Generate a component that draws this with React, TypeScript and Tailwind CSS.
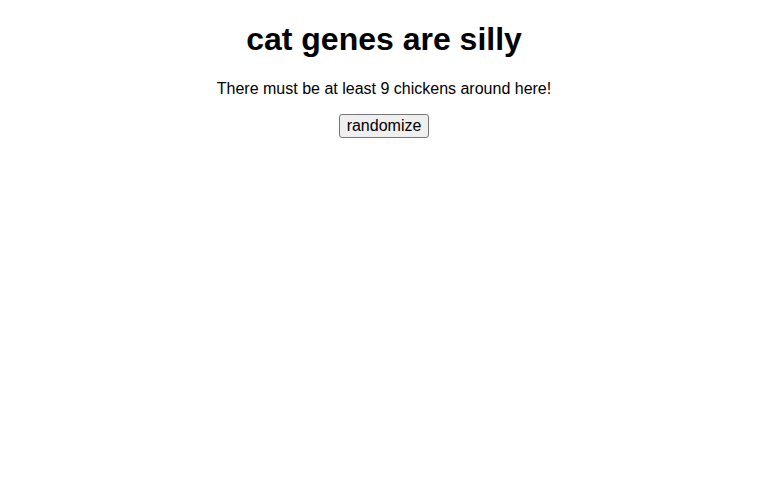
const App = () => {
  return (
    <div className="text-center text-black font-['Liberation_Sans',Arial,sans-serif]">
      <h1 className="text-[32px] font-bold leading-[normal] my-[21.44px]">cat genes are silly</h1>
      <p className="text-base leading-[normal] my-4">There must be at least 9 chickens around here!</p>
      <button className="text-base leading-[normal] px-[7px] py-[2px] border border-[#767676] rounded-[3px] bg-[#efefef] text-black">
        randomize
      </button>
    </div>
  );
};

export default App;
